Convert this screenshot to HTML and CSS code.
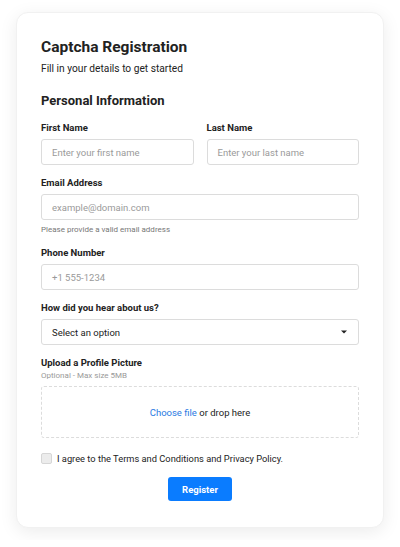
FILE: index.html
```html
<!DOCTYPE html>
<html lang="en">
<head>
<meta charset="utf-8">
<title>Captcha Registration</title>
<link rel="stylesheet" href="styles.css">
</head>
<body>
<main class="card">
  <h1 class="title">Captcha Registration</h1>
  <p class="subtitle">Fill in your details to get started</p>
  <h2 class="section">Personal Information</h2>

  <div class="row">
    <div class="field">
      <label class="label">First Name</label>
      <div class="input placeholder">Enter your first name</div>
    </div>
    <div class="field">
      <label class="label">Last Name</label>
      <div class="input placeholder">Enter your last name</div>
    </div>
  </div>

  <div class="field">
    <label class="label">Email Address</label>
    <div class="input placeholder">example@domain.com</div>
    <div class="help">Please provide a valid email address</div>
  </div>

  <div class="field">
    <label class="label">Phone Number</label>
    <div class="input placeholder">+1 555-1234</div>
  </div>

  <div class="field">
    <label class="label">How did you hear about us?</label>
    <div class="input select">
      <span>Select an option</span>
      <svg class="caret" width="6" height="4" viewBox="0 0 6 4"><path d="M0 0.5h6L3 3.5z" fill="#222"/></svg>
    </div>
  </div>

  <div class="field upload">
    <label class="label">Upload a Profile Picture</label>
    <div class="hint">Optional - Max size 5MB</div>
    <div class="dropzone"><span class="link">Choose file</span>&nbsp;or drop here</div>
  </div>

  <div class="agree">
    <span class="checkbox"></span>
    <span>I agree to the Terms and Conditions and Privacy Policy.</span>
  </div>

  <div class="actions">
    <button class="btn">Register</button>
  </div>
</main>
</body>
</html>
```

FILE: styles.css
```css
* { box-sizing: border-box; }
html, body { margin: 0; background: #ffffff; }
body {
  padding: 12px 16px;
  font-family: Roboto, "Open Sans", sans-serif;
  color: #222;
}
.card {
  background: #fff;
  border: 1px solid #f1f1f1;
  border-radius: 12px;
  box-shadow: 0 4px 18px rgba(0,0,0,0.08);
  padding: 24px 24px 26px;
}
.title {
  margin: 0;
  font-size: 15.5px;
  line-height: 20px;
  font-weight: 700;
}
.subtitle {
  margin: 4px 0 0;
  font-size: 10.2px;
  line-height: 16px;
}
.section {
  margin: 15px 0 11px;
  font-size: 13px;
  line-height: 18px;
  font-weight: 700;
}
.row {
  display: grid;
  grid-template-columns: 1fr 1fr;
  gap: 13px;
}
.field { margin-bottom: 11px; }
.label {
  display: block;
  font-size: 9.5px;
  line-height: 14px;
  font-weight: 700;
  margin-bottom: 4px;
}
.input {
  height: 26px;
  border: 1px solid #dcdcdc;
  border-radius: 3px;
  padding: 0 10px;
  display: flex;
  align-items: center;
  font-size: 9.5px;
}
.placeholder { color: #9a9a9a; }
.select { justify-content: space-between; color: #222; }
.caret { margin-right: 1px; }
.help {
  margin-top: 4px;
  font-size: 8px;
  line-height: 11px;
  color: #777;
}
.hint {
  margin-top: -4px;
  font-size: 8px;
  line-height: 12px;
  color: #999;
  margin-bottom: 4px;
}
.dropzone {
  height: 52px;
  border: 1px dashed #dcdcdc;
  border-radius: 3px;
  display: flex;
  align-items: center;
  justify-content: center;
  font-size: 9.5px;
}
.link { color: #2a7ae2; }
.upload { margin-bottom: 11px; }
.agree {
  display: flex;
  align-items: center;
  gap: 5px;
  height: 18px;
  font-size: 9.3px;
}
.checkbox {
  width: 11px;
  height: 11px;
  border: 1px solid #d6d6d6;
  background: #ececec;
  border-radius: 2px;
}
.actions {
  display: flex;
  justify-content: center;
  margin-top: 10px;
}
.btn {
  width: 64px;
  height: 24px;
  border: 0;
  border-radius: 3px;
  background: #0a7cff;
  color: #fff;
  font-family: inherit;
  font-size: 9.5px;
  font-weight: 700;
}
```
